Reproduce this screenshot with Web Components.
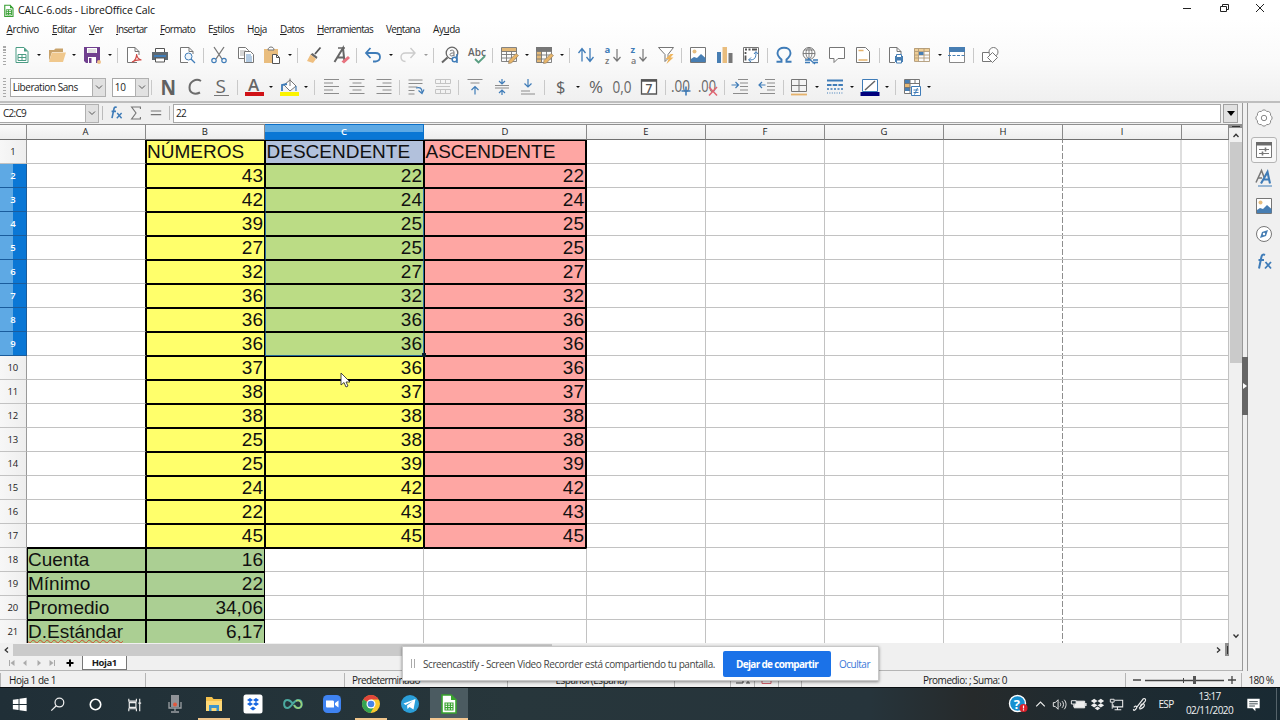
<!DOCTYPE html>
<html lang="es">
<head>
<meta charset="utf-8">
<title>CALC-6.ods - LibreOffice Calc</title>
<style>
  html, body { margin: 0; height: 100%; overflow: hidden; }
  body {
    font-family: "Open Sans", "Noto Sans", sans-serif;
    font-size: 10px;
    color: #1c1c1c;
  }
</style>
</head>
<body>
<calc-app></calc-app>

<script>
const define = (name, html, setup) => {
  const template = document.createElement('template');
  template.innerHTML = html;
  window.customElements.define(name, class extends HTMLElement {
    constructor() {
      super();
      this.attachShadow({ mode: 'open' });
      this.shadowRoot.appendChild(template.content.cloneNode(true));
    }

    connectedCallback() {
      if (setup) setup(this, this.shadowRoot);
    }
  });
};

const G = '#767676';
const B = '#3f7cb8';
const Y = '#e3b877';

const icons = {
  logo: `<path d="M5 3h7l4 4v11H5z" fill="#fff" stroke="#3aa035" stroke-width="1.5"/><path d="M12 2l4 5h-4z" fill="#3aa035"/><path d="M7 9h7v7H7zM7 11.5h7M7 14h7M10 9v7" fill="none" stroke="#3aa035" stroke-width="1.2"/>`,
  new: `<path d="M4 2.500h8l4 4v11H4z" fill="#fff" stroke="#4b9c84"/><path d="M12 2.500l4 4h-4z" fill="#4b9c84"/><path d="M6 9.500h8v6H6zM6 12.500h8M10 9.500v6" fill="none" stroke="#4b9c84"/>`,
  open: `<path d="M2 5h5l1.500-1.500H16V7H5l-3 9z" fill="#c9a36b"/><path d="M5 7.500h14L16 17H2z" fill="#f0c88d"/>`,
  save: `<path d="M2 2h16v16H4l-2-2z" fill="#70408f"/><path d="M5 3h10v5H5z" fill="#fff"/><path d="M6 5h8M6 7h8" stroke="#aaa" stroke-width=".7"/><path d="M6 12h8v6H6z" fill="#fff"/><path d="M7 13h2.500v5H7z" fill="#70408f"/><circle cx="17" cy="17" r="2" fill="#efc28b"/>`,
  pdf: `<path d="M13 17.500H3.500v-15H11l4 4V10M11 2.500v4h4" fill="#fff" stroke="${G}"/><path d="M8 17c3-1 5-5 4.500-8 .5 4 2.500 5.500 5 6-3-.5-6 0-9.500 2z" fill="none" stroke="#cf4a45" stroke-width="1.200"/>`,
  print: `<path d="M5.500 3.500h9v5h-9z" fill="#fff" stroke="#555"/><path d="M2 7h16v8H2z" fill="#5d6870"/><path d="M4 10h12v2H4z" fill="${B}"/><path d="M5.500 13h9v4h-9z" fill="#fff" stroke="#555"/>`,
  preview: `<path d="M11 17.500H3.500v-15H12l4 4V9M12 2.500v4h4" fill="#fff" stroke="${G}"/><circle cx="11.500" cy="11.500" r="3.500" fill="#eef5fb" stroke="${B}"/><path d="M14 14l4 4" stroke="${B}" stroke-width="1.300"/>`,
  cut: `<path d="M5 2l8 12M15 2L7 14" stroke="${G}" stroke-width="1.300"/><circle cx="5" cy="15.500" r="2.200" fill="none" stroke="${B}" stroke-width="1.200"/><circle cx="15" cy="15.500" r="2.200" fill="none" stroke="${B}" stroke-width="1.200"/>`,
  copy: `<path d="M2.500 2.500h7l3 3v8h-10z" fill="#fff" stroke="${G}"/><path d="M4 6h6M4 8h6M4 10h6" stroke="#999" stroke-width=".8"/><path d="M8.500 6.500h6l3 3v8h-9z" fill="#fff" stroke="${G}"/><path d="M10 10h5M10 12h6M10 14h6M10 16h6" stroke="${B}" stroke-width=".8"/>`,
  paste: `<path d="M2 4h14v14H2z" fill="#e9bd7e"/><path d="M6 5c0-4 6-4 6 0z" fill="#fff" stroke="${G}"/><path d="M10.500 9.500h4l3 3v6h-7z" fill="#fff" stroke="#555"/><path d="M14.500 9.500v3h3" fill="none" stroke="#555"/>`,
  brush: `<path d="M16.500 2.500L11 9" stroke="#555" stroke-width="1.800"/><path d="M8.500 8l5 4-1 2-6-4.500z" fill="#666"/><path d="M6.500 9.500l5.500 4.500-3 4-6-2z" fill="#efbf80"/>`,
  clear: `<path d="M3.500 17L12 3l1.500 14M6.500 12.500h7" fill="none" stroke="#666" stroke-width="2"/><path d="M7 3h7" stroke="#666" stroke-width="1.500"/><path d="M17 11l2 2-6 5.500-2.500-2z" fill="#e8737f"/>`,
  undo: `<path d="M7.500 3L3 8l4.500 5M3.500 8h9c6 0 6 8 0 8.500H10" fill="none" stroke="${B}" stroke-width="1.800"/>`,
  redo: `<path d="M12.500 3L17 8l-4.500 5M16.500 8h-9c-6 0-6 8 0 8.500" fill="none" stroke="#ccc" stroke-width="1.400"/>`,
  find: `<circle cx="12" cy="8" r="5.800" fill="none" stroke="#666" stroke-width="1.300"/><path d="M7.500 12.500l-5.500 5" stroke="#666" stroke-width="2"/><path d="M10 6c1-1.300 4-1.300 4 1v4M14 8c-5-.5-5 3-2 3l2-1" fill="none" stroke="#777"/><circle cx="14.500" cy="14.500" r="2.300" fill="#fff" stroke="${B}" stroke-width="1.500"/><path d="M17 9v9" stroke="${B}" stroke-width="1.500"/>`,
  spell: `<text x="1" y="10.500" font-size="10" font-weight="600" fill="#666" textLength="18">Abc</text><path d="M8 14l3.500 3.500L18 11" fill="none" stroke="#5a9e82" stroke-width="1.800"/>`,
  row: `<path d="M2 3h16v4H2z" fill="${Y}"/><path d="M2.500 2.500h15v14h-15zM2.500 6.500h15M2.500 9.500h15M2.500 13h15M7.500 6.500v10M12.500 6.500v10" fill="none" stroke="${G}" stroke-width=".9"/><path d="M17 8.500l2.500 2-7 7.500-3 .5.500-3z" fill="#e8b569" stroke="#8a765a" stroke-width=".6"/>`,
  col: `<path d="M3 6h5v12H3z" fill="${Y}"/><path d="M2 2h16v4H2z" fill="#777"/><path d="M2.500 2.500h15v15h-15zM2.500 6.500h15M2.500 10h15M2.500 14h15M7.500 2.500v15M12.500 2.500v15" fill="none" stroke="${G}" stroke-width=".9"/><path d="M17 8.500l2.500 2-7 7.500-3 .5.500-3z" fill="#e8b569" stroke="#8a765a" stroke-width=".6"/>`,
  sort: `<path d="M6 16.500V4M2.500 8L6 3.500 9.500 8" fill="none" stroke="${B}" stroke-width="1.300"/><path d="M14 3v13M10.500 12l3.500 4.500 3.500-4.500" fill="none" stroke="${B}" stroke-width="1.300"/>`,
  az: `<text x="1.500" y="7.800" font-size="9.500" font-weight="700" fill="${B}">a</text><text x="2" y="18.500" font-size="9" font-weight="600" fill="#777">z</text><path d="M14 4v12M10.500 12l3.500 4 3.500-4" fill="none" stroke="#777" stroke-width="1.200"/>`,
  za: `<text x="1.500" y="7.800" font-size="9.500" font-weight="700" fill="${B}">z</text><text x="2" y="18.500" font-size="9" font-weight="600" fill="#777">a</text><path d="M14 4v12M10.500 12l3.500 4 3.500-4" fill="none" stroke="#777" stroke-width="1.200"/>`,
  filter: `<path d="M2.500 2.500h15l-5.500 7v4l-3 3v-7z" fill="#fff" stroke="${G}"/><path d="M14.500 9l-5 5h3l-2 5 7-6.500h-3l3-3.500z" fill="#eeb55e"/>`,
  image: `<path d="M2.500 2.500h15v15h-15z" fill="#fff" stroke="${G}"/><circle cx="6.500" cy="6.500" r="2" fill="#e6bd7f"/><path d="M3 17v-3l3-2 3 1 4-4 4.500 4v4z" fill="#477eb3"/>`,
  chart: `<path d="M2 7h4v11H2z" fill="#477eb3"/><path d="M7.500 2h4.500v16H7.500z" fill="#e9bd7e"/><path d="M13.500 8h4v10h-4z" fill="#777"/>`,
  pivot: `<path d="M2.500 2.500h15v15h-15z" fill="#fff" stroke="${G}"/><path d="M4 4.500h2M7.500 4.500h2M11 4.500h5M4.500 7v2M4.500 10.500v5" stroke="#555" stroke-width="1.800"/><path d="M8 15c6 0 7-2 7-8M10 12.500L7.500 15l2.500 2M13 9l2-2.500L17 9" fill="none" stroke="${B}"/>`,
  omega: `<path d="M2.500 16.800h5v-2.300C4.500 12 3.500 10.500 3.500 8c0-7 13-7 13 0 0 2.500-1 4-4 6.500v2.300h5" fill="none" stroke="${B}" stroke-width="1.900"/>`,
  globe: `<circle cx="9" cy="8.500" r="6" fill="none" stroke="${G}"/><path d="M3 8.500h12M9 2.500v12M4 5h10M9 2.500c-4 2-4 9 0 12M9 2.500c4 2 4 9 0 12" fill="none" stroke="${G}" stroke-width=".9"/><path d="M5 15h6M13 15h5M5 17.500h5M12 17.500h6M8 13l7 6" stroke="${B}" stroke-width="1.300"/>`,
  comment: `<path d="M2.500 2.500h15v11H11l-4 4v-4H2.500z" fill="#fff" stroke="${G}"/>`,
  headfoot: `<path d="M3.500 2.500h9l4 4v11h-13z" fill="#fff" stroke="${G}"/><path d="M5.500 5.500h5M5.500 15h9" stroke="#e5b26b" stroke-width="1.600"/>`,
  area: `<path d="M9 17.500H3.500v-15H11l4 4V9M11 2.500v4h4" fill="#fff" stroke="${G}"/><path d="M9 11h8v6H9z" fill="#477eb3"/><path d="M10.500 9.500h5v3h-5zM10.500 15h5v3h-5z" fill="#fff" stroke="#477eb3"/>`,
  freeze: `<path d="M2 3h16v3H2zM2 3h4v13H2z" fill="#efce96"/><path d="M2.500 3.500h15v13h-15zM2.500 6.500h15M2.500 10h15M2.500 13h15M6.500 3.500v13M12 3.500v13" fill="none" stroke="#b09a78" stroke-width=".9"/><path d="M7 7h4.500v3H7z" fill="#477eb3"/>`,
  split: `<path d="M2.500 2.500h15v15h-15z" fill="#fff" stroke="#888"/><path d="M2 2h16v5H2z" fill="#477eb3"/><path d="M1 10.500h18" stroke="#477eb3" stroke-width="1.200" stroke-dasharray="3 1.500"/>`,
  shapes: `<path d="M2.500 7.500h8v9h-8z" fill="#fff" stroke="${G}"/><circle cx="13.500" cy="7" r="4.500" fill="#fff" stroke="${G}"/><path d="M12.500 7.500l5 5-5 5-5-5z" fill="#fff" stroke="${G}"/>`,
  bold: `<text x="2.500" y="17.500" font-size="21.500" font-weight="700" fill="#616161" textLength="15.500" lengthAdjust="spacingAndGlyphs">N</text>`,
  italic: `<path d="M16 4c-5-3-11.500.5-11.500 6.500s5.500 7.500 10.500 5" fill="none" stroke="#6c6c6c" stroke-width="2"/>`,
  under: `<text x="4.500" y="15.500" font-size="19" font-weight="500" fill="#666">S</text><path d="M3 18.500h15" stroke="#777"/>`,
  color: `<text x="4" y="14" font-size="17" font-weight="600" fill="#666">A</text><path d="M1 15h19v4H1z" fill="#d01217"/>`,
  bucket: `<path d="M11 3l6 6-6 5-6-6z" fill="#fff" stroke="${G}"/><path d="M11 9V1.500" stroke="${G}"/><path d="M3 14V8l5-1" fill="none" stroke="${B}" stroke-width="1.800"/><path d="M17 9v5" stroke="${B}" stroke-width="1.200"/><path d="M1 15h19v4H1z" fill="#fbf300"/>`,
  left: `<path d="M3 2.500h15M3 6h9M3 9.500h15M3 13h9M3 16.500h15" stroke="#8c8c8c"/>`,
  center: `<path d="M2.500 2.500h15M5.500 6h9M2.500 9.500h15M5.500 13h9M2.500 16.500h15" stroke="#8c8c8c"/>`,
  right: `<path d="M2.500 2.500h15M8.500 6h9M2.500 9.500h15M8.500 13h9M2.500 16.500h15" stroke="#8c8c8c"/>`,
  wrap: `<path d="M2.500 3h14M2.500 6.500h14M2.500 10h9M2.500 13.500h6M2.500 17h6" stroke="#8c8c8c"/><path d="M10 11c4-1 6 0 6 4M12.500 13.500l3.500 3 2-4" fill="none" stroke="${B}" stroke-width="1.200"/>`,
  merge: `<path d="M2.500 2.500h15v4h-15zM2.500 12.500h15v4h-15zM7.500 2.500v4M12.500 2.500v4M7.500 12.500v4M12.500 12.500v4M3 9.500h14" fill="none" stroke="#c4c4c4"/>`,
  top: `<path d="M2.500 2.500h15M5.500 6h9" stroke="#8c8c8c"/><path d="M10 17.500V10M6.500 13L10 9.500l3.500 3.500" fill="none" stroke="${B}" stroke-width="1.200"/>`,
  middle: `<path d="M3 8.500h14M3 11h14" stroke="#8c8c8c"/><path d="M10 2v4.500M7 4l3 3 3-3M10 18v-4.500M7 16l3-3 3 3" fill="none" stroke="${B}" stroke-width="1.200"/>`,
  bottom: `<path d="M3 17h14M3 14h9" stroke="#8c8c8c"/><path d="M10 2v8M6.500 6.500L10 10l3.500-3.500" fill="none" stroke="${B}" stroke-width="1.200"/>`,
  money: `<text x="5" y="15.500" font-size="16.500" fill="#5f5f5f">$</text>`,
  percent: `<text x="3" y="16" font-size="17" fill="#5f5f5f" textLength="14" lengthAdjust="spacingAndGlyphs">%</text>`,
  number: `<text x=".5" y="15.500" font-size="17" fill="#666" textLength="19" lengthAdjust="spacingAndGlyphs">0,0</text>`,
  date: `<path d="M2.500 3h15v14h-15z" fill="#fff" stroke="#555" stroke-width="1.300"/><path d="M2 3.500h16" stroke="#555" stroke-width="2.500"/><text x="6.500" y="15.500" font-size="12" font-weight="600" fill="#555">7</text>`,
  adddec: `<text x="0" y="15" font-size="16.500" fill="#666" textLength="19" lengthAdjust="spacingAndGlyphs">.00</text><path d="M10.500 14h9M15 9.500v9" stroke="${B}" stroke-width="1.600"/>`,
  deldec: `<text x="0" y="15" font-size="16.500" fill="#666" textLength="18" lengthAdjust="spacingAndGlyphs">.00</text><path d="M11 10l8 8.500M19 10l-8 8.500" stroke="#e16572" stroke-width="1.500"/>`,
  indent: `<path d="M8 2.500h10M10 6h8M10 9.500h8M10 13h8M3 16.500h15" stroke="#8c8c8c"/><path d="M1.500 8H8M5.500 5l3 3-3 3" fill="none" stroke="${B}" stroke-width="1.200"/>`,
  outdent: `<path d="M8 2.500h10M10 6h8M10 9.500h8M10 13h8M3 16.500h15" stroke="#8c8c8c"/><path d="M8.500 8H2M5 5L2 8l3 3" fill="none" stroke="${B}" stroke-width="1.200"/>`,
  borders: `<path d="M2.500 2.500h15v12h-15zM2.500 8.500h15M10 2.500v12" fill="none" stroke="${G}"/><path d="M2 17.500h16" stroke="#e5b26b" stroke-width="1.800"/>`,
  linestyle: `<path d="M2 3.500h16" stroke="${B}" stroke-width="2"/><path d="M2 8h16" stroke="${B}" stroke-width="1.800" stroke-dasharray="4.500 1.200"/><path d="M2 12h16" stroke="${B}" stroke-width="1.500" stroke-dasharray="2 1.500"/><path d="M2 16h16" stroke="${B}" stroke-width="1.200" stroke-dasharray="1 1.400"/>`,
  linecolor: `<path d="M2.500 2.500h15v12h-15z" fill="#fff" stroke="${B}"/><path d="M5 13L15 4" stroke="#666" stroke-width="1.500"/><path d="M.5 15h19v4H.5z" fill="#00007d"/>`,
  cond: `<path d="M2.500 2.500h15v14h-15z" fill="#fff" stroke="${G}"/><path d="M3 3h5v4H3zM3 11h5v3H3z" fill="#477eb3"/><path d="M3 7h5v4H3z" fill="#e9b973"/><path d="M2.500 6.500h15M8 2.500v14M2.500 10.500h6M13 2.500v4" stroke="${G}"/><path d="M9.500 9.500h9v9h-9z" fill="#fff" stroke="${B}"/><path d="M11.500 13h5M11.500 15.500h5M15.500 11l-3 6.500" stroke="${B}"/>`,
  gear: `<path d="M16.470 12.680A3 3 0 0 1 12.680 16.470A3 3 0 0 1 7.320 16.470A3 3 0 0 1 3.530 12.680A3 3 0 0 1 3.530 7.320A3 3 0 0 1 7.320 3.530A3 3 0 0 1 12.680 3.530A3 3 0 0 1 16.470 7.320A3 3 0 0 1 16.470 12.680z" fill="#fff" stroke="#888"/><circle cx="10" cy="10" r="2.700" fill="#fff" stroke="#888"/>`,
  props: `<path d="M2.500 2.500h15v15h-15z" fill="#fff" stroke="#777"/><path d="M2 2h16v3.500H2z" fill="#6b6b6b"/><path d="M5 9.500h10M5 13.500h10" stroke="#777" stroke-width="1.200"/><path d="M11.500 7.500v4M8.500 11.500v4" stroke="#777" stroke-width="1.600"/>`,
  styles: `<path d="M2 14.500L7.500 2.500 10 9M4 10h4" fill="none" stroke="#777" stroke-width="1.500"/><path d="M7 15.500L13.500 4 16 15.500M9 11.500h6" fill="none" stroke="${B}" stroke-width="2.100"/><path d="M4 18h14" stroke="${B}"/>`,
  compass: `<circle cx="10" cy="10" r="7.500" fill="#fff" stroke="#777"/><path d="M14 6l-2 6-6 2 2-6z" fill="#477eb3"/><circle cx="10" cy="10" r="1.200" fill="#fff"/>`,
  fx: `<path d="M11 3c-2-1-3.200 0-3.600 2L5 16.500M4.500 8H10" fill="none" stroke="${B}" stroke-width="2"/><path d="M11.500 10l5.500 6.500M17 10l-6 6.500" stroke="${B}" stroke-width="1.800"/>`,
  sum: `<path d="M15.500 5V2.500h-11L10 10l-5.500 7.500h11V15" fill="none" stroke="#757575" stroke-width="1.400"/>`,
  equals: `<path d="M3.500 7.500h13M3.500 12h13" stroke="#757575" stroke-width="1.400"/>`,
  win: `<path d="M3 5l6-.9v5.400H3zM10 4l7.500-1v6.500H10zM3 10.500h6v5.400L3 15zM10 10.500h7.500V17L10 16z" fill="#fff"/>`,
  search: `<circle cx="12" cy="8" r="4.600" fill="none" stroke="#eee" stroke-width="1.300"/><path d="M8.700 11.300L3.500 16.500" stroke="#eee" stroke-width="1.300"/>`,
  cortana: `<circle cx="10" cy="10" r="5.500" fill="none" stroke="#fff" stroke-width="1.700"/>`,
  tasks: `<path d="M4 4v2.500h8V4M4.500 8h7v5h-7zM4 17v-2.500h8V17M15.500 4v13M14 8.500h3" fill="none" stroke="#eee" stroke-width="1.200"/>`,
  mic: `<path d="M6 1h8v12H6z" fill="#909398"/><circle cx="10" cy="10.500" r="2" fill="#e2573c"/><path d="M4 8v6h12V8M10 14v3M6 18h8" fill="none" stroke="#9b9fa3" stroke-width="1.300"/>`,
  folder: `<path d="M2 3h6l1.500 2H18v12H2z" fill="#f5c24e"/><path d="M2 7h16v10H2z" fill="#ffd977"/><path d="M5 11h10v6h-2.500v-3h-5v3H5z" fill="#3e95cc"/>`,
  dropbox: `<rect x=".5" y=".5" width="19" height="19" rx="2.500" fill="#fff"/><path d="M7 4l3 2-3 2-3-2zM13 4l3 2-3 2-3-2zM7 8l3 2-3 2-3-2zM13 8l3 2-3 2-3-2zM10 12.500l3 2-3 2-3-2z" fill="#1665e0"/>`,
  infinity: `<path d="M10 10c-2-3-3.500-4-5.500-4-4.500 0-4.500 8 0 8 4 0 6-8 10.500-8 5 0 5 8 0 8-2 0-3-1-4-3" fill="none" stroke="#4ba99f" stroke-width="2"/><path d="M13 7c5-3 8 6 3 7-2 .4-4-1-5-3" fill="none" stroke="#9bd179" stroke-width="1.600"/>`,
  zoom: `<rect x="1" y="1" width="18" height="18" rx="4.500" fill="#3f83f1"/><path d="M4 6.500h6.500c1 0 1.500.5 1.500 1.500v5.500H5.500C4.500 13.500 4 13 4 12zM13 9l3.500-2.500v7L13 11z" fill="#fff"/>`,
  chrome: `<circle cx="10" cy="10" r="9" fill="#f9c92e"/><path d="M10 10L2.200 5.500A9 9 0 0 1 17.800 5.500H10z" fill="#e2463a"/><path d="M10 10L2.200 5.500A9 9 0 0 0 9.500 19L13.500 12z" fill="#34a351"/><circle cx="10" cy="10" r="4.500" fill="#fff"/><circle cx="10" cy="10" r="3.300" fill="#4684e8"/>`,
  telegram: `<circle cx="10" cy="10" r="9" fill="#2b9fd9"/><path d="M3.500 9.500l12-4.500-2 10.500-4-2.500-2 2-.5-3.500 6-4.500-7.500 4z" fill="#fff"/>`,
  calc: `<path d="M3 1h9l5 5v13H3z" fill="#fff" stroke="#38a32e" stroke-width="1.600"/><path d="M12 .5L17.500 6H12z" fill="#38a32e"/><path d="M6 9h8v7H6zM6 11.300h8M6 13.600h8M8.700 9v7M11.400 9v7" fill="none" stroke="#38a32e" stroke-width="1.100"/>`,
  help: `<circle cx="9.500" cy="9.500" r="8" fill="#1790d0" stroke="#fff" stroke-width="1.400"/><text x="5.800" y="14.500" font-size="13" font-weight="700" fill="#fff">?</text><circle cx="15.500" cy="14" r="4" fill="#d9202a"/><path d="M15.500 11.500v3M15.500 15.300v1.200" stroke="#fff" stroke-width="1.200"/>`,
  chevron: `<path d="M5.500 12L10 7.500l4.500 4.500" fill="none" stroke="#eee" stroke-width="1.200"/>`,
  sound: `<path d="M3.500 8h2l3-3v10l-3-3h-2z" fill="none" stroke="#eee"/><path d="M10.500 8c1 1.200 1 2.800 0 4M12.700 6.500c2 2 2 5 0 7M15 5c2.500 3 2.500 7 0 10" fill="none" stroke="#eee"/>`,
  battery: `<path d="M7 6.500h9.500v7H5.500V11" fill="#eee" stroke="#eee"/><path d="M17 8.500h1.500v3H17z" fill="#eee"/><path d="M2.500 6h5v3.500h-5zM5 9.500v3" fill="#1d2c34" stroke="#eee"/>`,
  dropboxtray: `<path d="M6.500 4L10 6.300 6.500 8.600 3 6.300zM13.500 4L17 6.300l-3.500 2.300L10 6.300zM6.500 8.600l3.500 2.300-3.500 2.300L3 10.900zM13.500 8.600l3.500 2.300-3.500 2.300-3.500-2.300zM10 12l3 2-3 2-3-2z" fill="#eee"/>`,
  network: `<path d="M8 5.500h8.500v7h-10V10M11 12.500v3M8 15.500h7" fill="none" stroke="#eee" stroke-width="1.100"/><path d="M3.500 4.500h4v3h-4zM5.500 7.500v7" fill="none" stroke="#eee"/>`,
  pen: `<path d="M4 13c3-3 4 0 2 2s-3 1-2 0M7 13l7-9c2-1 3 1 2 2.500L9.500 14M10 15c3-1 6-3 5-5s-4 0-4 2" fill="none" stroke="#eee" stroke-width="1.200"/>`,
  chat: `<path d="M3.500 4h13v10H12v3l-3-3H3.500z" fill="#fff"/><path d="M5.500 7h9M5.500 9.300h9M5.500 11.600h6" stroke="#1f2e35" stroke-width=".9"/>`
};

define('ui-icon', `
  <style>
    :host { display: flex; justify-content: center; align-items: center; width: 26.5px; flex: none; }
    svg { width: var(--icon-size, 20px); height: var(--icon-size, 20px); flex: none; display: block; overflow: visible; }
  </style>
  <svg viewBox="0 0 20 20"></svg>
`, (el, root) => {
  root.querySelector('svg').innerHTML = icons[el.getAttribute('name')] || '';
});

// one line of text, tracked so that it fills the width in its "w" attribute
define('ui-label', `
  <style>
    :host { display: block; white-space: nowrap; flex: none; }
    span { display: inline-block; white-space: pre; }
  </style>
  <span><slot></slot></span>
`, (el, root) => {
  const width = parseFloat(el.getAttribute('w'));
  if (!width) return;
  const span = root.querySelector('span');
  span.style.letterSpacing = `${(width - span.getBoundingClientRect().width) / el.textContent.trim().length}px`;
  el.style.width = `${width}px`;
});

define('tool-drop', `
  <style>
    :host { display: flex; width: 8.75px; justify-content: center; align-items: center; flex: none; }
    i { border: 2px solid transparent; border-top: 2.500px solid #111; border-bottom: 0; }
    :host([off]) i { border-top-color: #999; }
  </style>
  <i></i>
`);

define('tool-sep', `
  <style>
    :host { display: flex; width: 6px; justify-content: center; align-items: center; flex: none; }
    :host([wide]) { width: 6.500px; }
    i { width: 1px; height: 15px; background: #c9c9c9; }
  </style>
  <i></i>
`);

define('tool-bar', `
  <style>
    :host { display: flex; align-items: center; height: 32px; flex: none; }
    .grip { width: 3px; height: 19px; margin: 0 2.250px 0 3px; background: repeating-linear-gradient(#a9a9a9 0 1.500px, transparent 1.500px 3px); }
  </style>
  <div class="grip"></div>
  <slot></slot>
`);

define('combo-box', `
  <style>
    :host { display: flex; box-sizing: border-box; height: 19px; border: 1px solid #a8a8a8; background: #fff; align-items: center; flex: none; }
    .text { flex: 1; padding-left: var(--pad, 2px); }
    .button { align-self: stretch; width: 12px; display: flex; align-items: center; justify-content: center; background: #e1e1e1; border: 1px solid #b0b0b0; margin: -1px; }
    svg { width: 8px; height: 8px; }
  </style>
  <div class="text"><slot></slot></div>
  <div class="button"><svg viewBox="0 0 8 8"><path d="M1 2.500l3 3 3-3" fill="none" stroke="#555"/></svg></div>
`);

define('title-bar', `
  <style>
    :host { display: flex; align-items: center; height: 20px; background: #fff; padding-left: 1px; box-sizing: border-box; font-size: 10.500px; color: #111; flex: none; }
    ui-icon { --icon-size: 15px; width: 14px; margin-right: 3px; }
    .buttons { margin-left: auto; display: flex; padding-right: 15px; gap: 26.500px; margin-top: -4px; }
    svg { width: 10px; height: 10px; overflow: visible; }
  </style>
  <ui-icon name="logo"></ui-icon>
  <ui-label w="137">CALC-6.ods - LibreOffice Calc</ui-label>
  <div class="buttons">
    <svg viewBox="0 0 10 10"><path d="M1 5.500h8" stroke="#222"/></svg>
    <svg viewBox="0 0 10 10"><path d="M1.500 3.500h6v5h-6zM3.500 3V1.500h6v5H8" fill="none" stroke="#222"/></svg>
    <svg viewBox="0 0 10 10"><path d="M1 1l8 8M9 1L1 9" stroke="#222"/></svg>
  </div>
`);

define('menu-bar', `
  <style>
    :host { display: flex; align-items: center; height: 19px; box-sizing: border-box; padding: 0 0 2px 6.500px; gap: 13px; flex: none; font-size: 10px; color: #222; }
    u { text-underline-offset: 1px; text-decoration-thickness: 1px; }
  </style>
  <ui-label w="32.500"><u>A</u>rchivo</ui-label>
  <ui-label w="24"><u>E</u>ditar</ui-label>
  <ui-label w="14"><u>V</u>er</ui-label>
  <ui-label w="31"><u>I</u>nsertar</ui-label>
  <ui-label w="35"><u>F</u>ormato</ui-label>
  <ui-label w="26">E<u>s</u>tilos</ui-label>
  <ui-label w="20">H<u>o</u>ja</ui-label>
  <ui-label w="24"><u>D</u>atos</ui-label>
  <ui-label w="56"><u>H</u>erramientas</ui-label>
  <ui-label w="34">Ve<u>n</u>tana</ui-label>
  <ui-label w="27">Ay<u>u</u>da</ui-label>
`);

define('formula-bar', `
  <style>
    :host { display: flex; align-items: center; height: 21px; background: #f0f0f0; flex: none; box-sizing: border-box; padding-bottom: 1px; }
    combo-box { width: 100px; --pad: 3px; margin-left: -1px; }
    ui-icon { width: 20px; --icon-size: 16px; }
    i { width: 1px; height: 14px; background: #bbb; margin: 0 3px; }
    .input { flex: 1; height: 19px; box-sizing: border-box; border: 1px solid #a8a8a8; background: #fff; display: flex; align-items: center; padding-left: 2px; }
    .expand { width: 13px; height: 17px; border: 1px solid #a0a0a0; background: #e1e1e1; display: flex; align-items: center; justify-content: center; margin: 0 4px 0 2px; box-sizing: content-box; }
    .expand b { border: 4px solid transparent; border-top: 5px solid #000; border-bottom: 0; }
  </style>
  <combo-box><ui-label w="23">C2:C9</ui-label></combo-box>
  <i></i>
  <ui-icon name="fx"></ui-icon>
  <ui-icon name="sum"></ui-icon>
  <ui-icon name="equals"></ui-icon>
  <i></i>
  <div class="input"><ui-label w="10">22</ui-label></div>
  <div class="expand"><b></b></div>
`);

const numbers = [43, 42, 39, 27, 32, 36, 36, 36, 37, 38, 38, 25, 25, 24, 22, 45];
const sorted = [22, 24, 25, 25, 27, 32, 36, 36, 36, 37, 38, 38, 39, 42, 43, 45];
const stats = [['Cuenta', '16'], ['Mínimo', '22'], ['Promedio', '34,06'], ['D.Estándar', '6,17']];

define('sheet-grid', `
  <style>
    :host {
      display: grid;
      grid-template-columns: 26.5px 119px 119.5px 159px 163px repeat(4, 119px) 119px 47px;
      grid-template-rows: 16px repeat(21, 24px);
      width: 1229px;
      height: 519px;
      overflow: hidden;
      background: #fff;
      flex: none;
    }
    div { box-sizing: border-box; border-right: 1px solid #c2c2c2; border-bottom: 1px solid #c2c2c2; min-width: 0; }
    .head { background: linear-gradient(#fafafa, #eee); border-top: 1px solid #8f8f8f; border-right-color: #8a8a8a; border-bottom-color: #707070; text-align: center; font-size: 9.500px; line-height: 14px; }
    .head.on { background: linear-gradient(#5ea9e4 0 50%, #0a77d5 50%); color: #fff; font-weight: 600; border-color: #0a6fc7; }
    .num { background: linear-gradient(90deg, #f7f7f7, #eee); border-right-color: #999; text-align: center; font-size: 9.500px; line-height: 24px; letter-spacing: -0.3px; }
    .num.on { background: linear-gradient(90deg, #5ea9e4 0 50%, #0a77d5 50%); color: #fff; font-weight: 600; border-color: #1a5c9c; }
    .box { border: 1px solid #000; font: 19px/22px "Liberation Sans", Arial, sans-serif; color: #111; padding: 0 1px 0 0.5px; white-space: nowrap; }
    .r { text-align: right; }
    .yellow { background: #ffff6b; }
    .blue { background: #b2c1dc; }
    .green { background: #bbdc85; }
    .pink { background: #fea6a3; }
    .sage { background: #abcf93; }
    .edge { border-right-color: #000; }
    .under { border-bottom-color: #000; }
    .over { border-top: 1px solid #000; }
    .last { border-right-width: 2px; }
    .sel { border-left-color: #2b6f9e; border-right-color: #2b6f9e; }
    .selend { border-bottom-color: #246b94; position: relative; }
    .selend::after { content: ''; position: absolute; right: -3px; bottom: -2px; width: 4px; height: 4px; background: #0b1d2b; z-index: 2; }
    .page { border-right: 0; background: repeating-linear-gradient(transparent 0 3px, #fff 3px 5px, transparent 5px 8px) right / 1px 100% no-repeat, linear-gradient(#8e8e8e, #8e8e8e) right / 1px 100% no-repeat; }
    .soft { border-right: 2px solid #dedede; }
    .spell { text-decoration: underline wavy #d0482e 0.7px; text-underline-offset: 1px; text-decoration-skip-ink: none; }
  </style>
`, (el, root) => {
  const add = (cls, text = '') => {
    const cell = document.createElement('div');
    cell.className = cls;
    cell.textContent = text;
    root.appendChild(cell);
    return cell;
  };

  add('head');
  ['A', 'B', 'C', 'D', 'E', 'F', 'G', 'H', 'I', ''].forEach(c => add(c === 'C' ? 'head on' : 'head', c));

  for (let row = 1; row <= 21; row++) {
    add(row > 1 && row < 10 ? 'num on' : 'num', row);
    if (row === 1) {
      add('edge');
      add('box yellow', 'NÚMEROS');
      add('box blue', 'DESCENDENTE');
      add('box pink last', 'ASCENDENTE');
    } else if (row <= 17) {
      let c = 'box r yellow';
      if (row < 10) c = 'box r green';
      if (row > 2 && row < 10) c += ' sel';
      if (row === 9) c += ' selend';
      add(row === 17 ? 'edge under' : 'edge');
      add('box r yellow', numbers[row - 2]);
      add(c, sorted[row - 2]);
      add('box r pink last', sorted[row - 2]);
    } else {
      const [name, value] = stats[row - 18];
      const label = add('box sage', row === 21 ? '' : name);
      if (row === 21) label.innerHTML = `<span class="spell">${name}</span>`;
      add('box r sage', value);
      add(row === 18 ? 'over' : '');
      add(row === 18 ? 'over' : '');
    }
    add('');
    add('');
    add('');
    add('page');
    add('soft');
    add('');
  }
});

define('scroll-vertical', `
  <style>
    :host { display: flex; flex-direction: column; width: 13px; background: #f0f0f0; flex: none; align-items: center; }
    .split { width: 13px; height: 4px; background: #8e8e8e; display: flex; align-items: center; justify-content: center; }
    .split i { width: 8px; height: 1px; background: #333; }
    svg { width: 8px; height: 14px; }
    .track { flex: 1; }
    .thumb { width: 12px; height: 221px; background: #cacaca; }
  </style>
  <div class="split"><i></i></div>
  <svg viewBox="0 0 8 14"><path d="M1.500 9L4 6.200 6.500 9" fill="none" stroke="#333" stroke-width="1.300"/></svg>
  <div class="track"><div class="thumb"></div></div>
  <svg viewBox="0 0 8 14"><path d="M1.500 5.500L4 8.300l2.500-2.800" fill="none" stroke="#333" stroke-width="1.300"/></svg>
`);

define('scroll-horizontal', `
  <style>
    :host { display: flex; height: 13px; background: #f0f0f0; align-items: center; flex: none; width: 1229px; }
    svg { width: 13px; height: 8px; }
    .track { flex: 1; align-self: stretch; }
    .thumb { width: 539px; height: 12px; margin-top: 1px; background: #cacaca; }
    .split { width: 4px; height: 13px; background: #8e8e8e; display: flex; align-items: center; justify-content: center; }
    .split i { width: 1px; height: 8px; background: #333; }
  </style>
  <svg viewBox="0 0 13 8"><path d="M8 1.500L5.200 4 8 6.500" fill="none" stroke="#333" stroke-width="1.300"/></svg>
  <div class="track"><div class="thumb"></div></div>
  <svg viewBox="0 0 13 8"><path d="M5 1.500L7.800 4 5 6.500" fill="none" stroke="#333" stroke-width="1.300"/></svg>
  <div class="split"><i></i></div>
`);

define('sheet-tabs', `
  <style>
    :host { display: flex; height: 15px; background: #f0f0f0; padding-left: 8px; flex: none; border-bottom: 1px solid #b5b5b5; box-sizing: border-box; align-items: center; }
    svg { width: 8px; height: 8px; margin-right: 5.300px; }
    .add { width: 8px; height: 8px; margin: 0 7.500px 0 5px; }
    .tab { width: 45px; height: 14px; box-sizing: border-box; border: 1px solid #777; border-top: 0; background: #fff; display: flex; justify-content: center; align-items: center; font-weight: 700; font-size: 9.500px; }
  </style>
  <svg viewBox="0 0 8 8"><path d="M1.500 1v6" stroke="#aaa"/><path d="M6.500 1v6L2.500 4z" fill="#aaa"/></svg>
  <svg viewBox="0 0 8 8"><path d="M5.500 1v6L2 4z" fill="#aaa"/></svg>
  <svg viewBox="0 0 8 8"><path d="M2.500 1v6L6 4z" fill="#aaa"/></svg>
  <svg viewBox="0 0 8 8"><path d="M6.500 1v6" stroke="#aaa"/><path d="M1.500 1v6L5.500 4z" fill="#aaa"/></svg>
  <svg class="add" viewBox="0 0 8 8"><path d="M4 .5v7M.5 4h7" stroke="#000" stroke-width="2"/></svg>
  <div class="tab"><ui-label w="25">Hoja1</ui-label></div>
`);

define('side-bar', `
  <style>
    :host { display: flex; flex: none; width: 38px; background: #f0f0f0; }
    .split { width: 6px; box-sizing: border-box; border-left: 1px solid #999; border-right: 1px solid #999; display: flex; flex-direction: column; padding-top: 254px; }
    .handle { height: 58px; margin: 0 -1px; background: #666; display: flex; align-items: center; justify-content: center; }
    .handle i { border: 3px solid transparent; border-left: 4px solid #fff; border-right: 0; }
    .deck { flex: 1; display: flex; flex-direction: column; align-items: center; padding-top: 2px; }
    ui-icon { height: 26px; width: 26px; box-sizing: border-box; margin-bottom: 2px; }
    .on { border: 1px solid #b5b5b5; border-radius: 3px; background: #f7f7f7; margin-top: 4px; }
  </style>
  <div class="split"><div class="handle"><i></i></div></div>
  <div class="deck">
    <ui-icon name="gear"></ui-icon>
    <ui-icon name="props" class="on"></ui-icon>
    <ui-icon name="styles"></ui-icon>
    <ui-icon name="image"></ui-icon>
    <ui-icon name="compass"></ui-icon>
    <ui-icon name="fx"></ui-icon>
  </div>
`);

define('status-bar', `
  <style>
    :host { display: grid; grid-template-columns: 145px 199px 163px 167px 56px 24px 24px 23px 324px 116px 39px; height: 17px; background: #f0f0f0; flex: none; align-items: center; font-size: 10px; border-bottom: 1px solid #0a0f12; box-sizing: border-box; padding-top: 2px; }
    div { display: flex; align-items: center; justify-content: center; height: 14px; border-left: 1px solid #b5b5b5; box-sizing: border-box; }
    div:first-child { border-left: 0; }
    .start { justify-content: flex-start; padding-left: 8px; }
    svg { display: block; width: 115px; height: 14px; }
    .mark svg { width: 20px; }
  </style>
  <div class="start"><ui-label w="47">Hoja 1 de 1</ui-label></div>
  <div></div>
  <div class="start" style="padding-left: 7px"><ui-label w="68">Predeterminado</ui-label></div>
  <div><ui-label w="71">Español (España)</ui-label></div>
  <div></div>
  <div class="mark"><svg viewBox="0 0 20 14"><path d="M3 4h7v6H3M15 4v6M13 10h4" fill="none" stroke="#444"/></svg></div>
  <div class="mark"><svg viewBox="0 0 20 14"><path d="M5 3h6l3 3v4.500H5z" fill="none" stroke="#d0606a"/></svg></div>
  <div></div>
  <div><ui-label w="84" style="margin-left: 3px">Promedio: ; Suma: 0</ui-label></div>
  <div><svg viewBox="0 0 115 14"><path d="M7 7h8M19 7.500h79M102 7h8M106 3v8" stroke="#444" stroke-width="1.300" fill="none"/><path d="M57.500 5v5" stroke="#444"/><path d="M67 3h3v8h-3z" fill="#555"/></svg></div>
  <div><ui-label w="25">180 %</ui-label></div>
`);

define('task-bar', `
  <style>
    :host { display: flex; height: 32px; flex: none; background: linear-gradient(90deg, #202f37, #27363b 40%, #26343b 68%, #262a2b 76%, #1f2b31 85%, #192a33); color: #f2f2f2; font-size: 10px; }
    .app { width: 39.200px; box-sizing: border-box; display: flex; align-items: center; justify-content: center; }
    .sys { width: 38.400px; }
    .sys ui-icon { --icon-size: 19px; }
    .open { box-shadow: inset 0 -2px #efc58b; margin: 0 3.500px; width: 32px; }
    .active { background: #4b5b61; box-shadow: inset 0 -2px #f3c791; width: 38px; }
    .mic { margin-left: 2px; }
    .tray { margin-left: auto; display: flex; align-items: center; }
    .tray ui-icon { width: 19.200px; --icon-size: 19px; }
    .tray .help { width: 26px; --icon-size: 20px; }
    .clock { display: flex; flex-direction: column; align-items: center; width: 48px; margin: 0 10px 0 12px; line-height: 13.500px; padding-bottom: 1px; }
    .end { width: 3px; height: 32px; border-left: 1px solid #55636a; margin-left: 12.500px; }
  </style>
  <div class="app sys"><ui-icon name="win"></ui-icon></div>
  <div class="app sys"><ui-icon name="search"></ui-icon></div>
  <div class="app sys"><ui-icon name="cortana"></ui-icon></div>
  <div class="app sys"><ui-icon name="tasks"></ui-icon></div>
  <div class="app mic"><ui-icon name="mic"></ui-icon></div>
  <div class="app open"><ui-icon name="folder"></ui-icon></div>
  <div class="app"><ui-icon name="dropbox"></ui-icon></div>
  <div class="app"><ui-icon name="infinity"></ui-icon></div>
  <div class="app"><ui-icon name="zoom"></ui-icon></div>
  <div class="app open"><ui-icon name="chrome"></ui-icon></div>
  <div class="app"><ui-icon name="telegram"></ui-icon></div>
  <div class="app active"><ui-icon name="calc"></ui-icon></div>
  <div class="tray">
    <ui-icon class="help" name="help"></ui-icon>
    <ui-icon name="chevron"></ui-icon>
    <ui-icon name="sound"></ui-icon>
    <ui-icon name="battery"></ui-icon>
    <ui-icon name="dropboxtray"></ui-icon>
    <ui-icon name="network"></ui-icon>
    <ui-icon name="pen" style="width: 25px"></ui-icon>
    <ui-label w="15" style="margin-left: 7px">ESP</ui-label>
    <div class="clock"><ui-label w="22">13:17</ui-label><ui-label w="47">02/11/2020</ui-label></div>
    <ui-icon name="chat" style="width: 20px"></ui-icon>
    <div class="end"></div>
  </div>
`);

define('share-notice', `
  <style>
    :host { display: flex; align-items: center; box-sizing: border-box; width: 477px; height: 35px; background: #fff; border: 1px solid #c8c8c8; box-shadow: 0 1px 3px rgba(0,0,0,.45); font-size: 10px; color: #444; padding-left: 8px; }
    .grip { width: 2px; height: 9px; border-left: 1px solid #aaa; border-right: 1px solid #aaa; margin-right: 8px; }
    button { all: unset; display: flex; justify-content: center; align-items: center; width: 108px; height: 26px; margin: 0 8px; border-radius: 2px; background: #1b72e8; color: #fff; font-weight: 700; }
    a { color: #3b78d8; }
  </style>
  <div class="grip"></div>
  <ui-label w="292">Screencastify - Screen Video Recorder está compartiendo tu pantalla.</ui-label>
  <button><ui-label w="82">Dejar de compartir</ui-label></button>
  <a><ui-label w="31">Ocultar</ui-label></a>
`);

const bar = names => names.split(' ').map((name, i, all) => {
  if (name === '|') return /^v-?$/.test(all[i - 1]) ? '<tool-sep wide></tool-sep>' : '<tool-sep></tool-sep>';
  if (name === 'v') return '<tool-drop></tool-drop>';
  if (name === 'v-') return '<tool-drop off></tool-drop>';
  return `<ui-icon name="${name}"></ui-icon>`;
}).join('');

define('calc-app', `
  <style>
    :host { display: flex; flex-direction: column; width: 1280px; height: 720px; position: relative; overflow: hidden; background: #fff; }
    .bars { height: 83px; box-sizing: border-box; display: flex; flex-direction: column; background: linear-gradient(#fff, #fafafa 50%, #f0f0f0); border-bottom: 2px solid #bebebe; flex: none; }
    .main { display: flex; height: 568px; flex: none; }
    .doc { width: 1242px; display: flex; flex-direction: column; background: #f0f0f0; }
    .view { display: flex; height: 519px; flex: none; }
    combo-box { font-size: 10px; }
    .font { width: 96px; margin-left: 1.500px; }
    .size { width: 37px; margin: 0 0 0 6px; }
    share-notice { position: absolute; left: 402px; top: 646px; }
    .pointer { position: absolute; left: 340px; top: 372px; width: 12px; height: 17px; }
  </style>
  <title-bar></title-bar>
  <div class="bars">
    <menu-bar></menu-bar>
    <tool-bar>${bar('new v open v save v | pdf print preview | cut copy paste v | brush clear | undo v redo v- | find spell | row v col v | sort az za filter | image chart pivot | omega globe comment headfoot | area freeze v split | shapes')}</tool-bar>
    <tool-bar>
      <combo-box class="font"><ui-label w="65">Liberation Sans</ui-label></combo-box>
      <combo-box class="size"><ui-label w="11">10</ui-label></combo-box>
      ${bar('| bold italic under | color v bucket v | left center right | wrap merge | top middle bottom | money v percent number date | adddec deldec | indent outdent | borders v linestyle v linecolor v | cond v')}
    </tool-bar>
  </div>
  <div class="main">
    <div class="doc">
      <formula-bar></formula-bar>
      <div class="view">
        <sheet-grid></sheet-grid>
        <scroll-vertical></scroll-vertical>
      </div>
      <scroll-horizontal></scroll-horizontal>
      <sheet-tabs></sheet-tabs>
    </div>
    <side-bar></side-bar>
  </div>
  <status-bar></status-bar>
  <task-bar></task-bar>
  <share-notice></share-notice>
  <svg class="pointer" viewBox="0 0 12 17"><path d="M1 1v12l3-2.500 2 4.500 2-1-2-4h4z" fill="#fff" stroke="#333" stroke-width=".9"/></svg>
`);
</script>
</body>
</html>
